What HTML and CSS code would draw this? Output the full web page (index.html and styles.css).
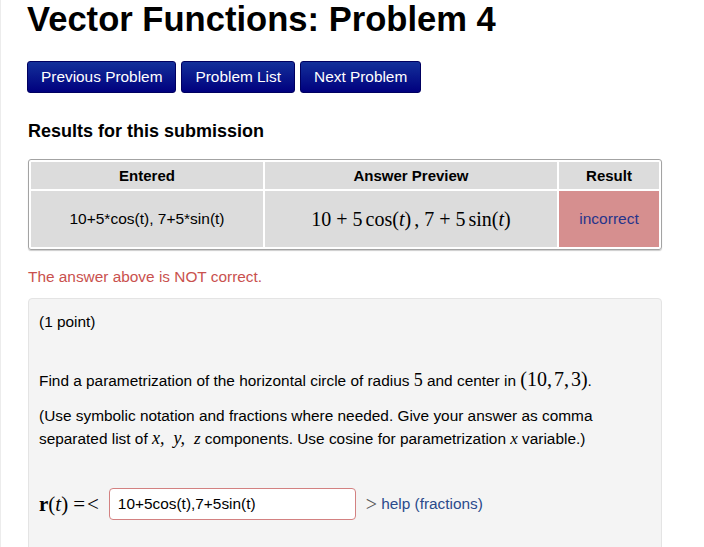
FILE: index.html
```html
<!DOCTYPE html>
<html>
<head>
<meta charset="utf-8">
<link rel="stylesheet" href="styles.css">
</head>
<body>
<div class="page">
  <h1 class="title">Vector Functions: Problem 4</h1>
  <div class="nav">
    <a class="btn">Previous Problem</a>
    <a class="btn">Problem List</a>
    <a class="btn">Next Problem</a>
  </div>
  <h2 class="subhead">Results for this submission</h2>
  <table class="results">
    <colgroup>
      <col class="c1"><col class="c2"><col class="c3">
    </colgroup>
    <tr>
      <th>Entered</th>
      <th>Answer Preview</th>
      <th>Result</th>
    </tr>
    <tr class="row">
      <td class="entered">10+5*cos(t), 7+5*sin(t)</td>
      <td class="preview"><span class="math">10 + 5<span class="sp"></span>cos(<i>t</i>)<span class="sp"></span>, 7 + 5<span class="sp"></span>sin(<i>t</i>)</span></td>
      <td class="bad">incorrect</td>
    </tr>
  </table>
  <p class="warn">The answer above is NOT correct.</p>
  <div class="problem">
    <p class="points">(1 point)</p>
    <p class="q">Find a parametrization of the horizontal circle of radius <span class="m">5</span> and center in <span class="m big">(10,<span class="thin"></span>7,<span class="thin"></span>3)</span>.</p>
    <div class="note">
      <div class="line">(Use symbolic notation and fractions where needed. Give your answer as comma</div>
      <div class="line">separated list of <span class="m">x, &nbsp;y, &nbsp;<span class="sm">z</span></span> components. Use cosine for parametrization <span class="m sm">x</span> variable.)</div>
    </div>
    <div class="answer">
      <span class="m lhs"><b>r</b>(<i>t</i>)<span class="eq">=</span>&lt;</span>
      <span class="input">10+5cos(t),7+5sin(t)</span>
      <span class="m gt">&gt;</span>
      <a class="help">help (fractions)</a>
    </div>
  </div>
</div>
</body>
</html>
```
FILE: styles.css
```css
html, body {
  margin: 0;
  padding: 0;
  background: #fff;
}
body {
  font-family: "Liberation Sans", Arial, sans-serif;
  color: #000;
  border-left: 1px solid #ececec;
  min-height: 547px;
  box-sizing: border-box;
}
.page {
  padding-left: 26px;
  width: 635px;
}
.title {
  margin: 0;
  font-size: 34.6px;
  font-weight: bold;
  line-height: 39px;
}
.nav {
  display: flex;
  gap: 5px;
  margin-top: 22px;
}
.btn {
  display: block;
  height: 30px;
  line-height: 30px;
  padding: 0 13px;
  font-size: 15.4px;
  color: #fff;
  background: linear-gradient(#13309a, #00007e);
  border: 1px solid #000060;
  border-radius: 3px;
}
.subhead {
  margin: 28px 0 0 1px;
  font-size: 18px;
  line-height: 21px;
  font-weight: bold;
}
.results {
  margin-top: 17px;
  margin-left: 1px;
  width: 634px;
  border: 1px solid #a3a3a3;
  border-radius: 3px;
  border-spacing: 2px;
  border-collapse: separate;
  table-layout: fixed;
  box-shadow: 0 1px 1px #ccc;
}
.c1 { width: 232px; }
.c2 { width: 292px; }
.c3 { width: 100px; }
.results th, .results td {
  background: #dcdcdc;
  text-align: center;
  padding: 0;
}
.results th {
  height: 27px;
  font-size: 15px;
  font-weight: bold;
}
.results td {
  height: 56px;
  font-size: 15.5px;
}
.results td.bad {
  background: #d68f8f;
  color: #27348b;
  font-size: 15.5px;
}
.math {
  font-family: "Liberation Serif", "DejaVu Serif", serif;
  font-size: 20px;
}
.sp { display: inline-block; width: 3px; }
.thin { display: inline-block; width: 2px; }
.warn {
  margin: 18px 0 0 1px;
  font-size: 15.4px;
  color: #c9514e;
  line-height: 18px;
}
.problem {
  margin: 12px 0 0 1px;
  width: 634px;
  box-sizing: border-box;
  height: 260px;
  background: #f4f4f4;
  border: 1px solid #e4e4e4;
  border-radius: 4px;
  padding: 11px 10px;
  font-size: 15.4px;
}
.problem p {
  margin: 0;
  line-height: 23px;
}
.q { margin-top: 35px !important; }
.note { margin-top: 12px; }
.note .line { height: 23px; line-height: 23px; white-space: nowrap; }
.m {
  font-family: "Liberation Serif", "DejaVu Serif", serif;
  font-size: 18px;
}
.note .m { font-style: italic; line-height: 1; }
.m.big { font-size: 20px; }
.sm { font-size: 17px; }
.answer {
  display: flex;
  align-items: center;
  margin-top: 38px;
}
.lhs { font-size: 21px; }
.eq { margin: 0 2px 0 5px; }
.input {
  display: block;
  margin-left: 10px;
  width: 247px;
  height: 32px;
  box-sizing: border-box;
  line-height: 30px;
  padding: 0 8px;
  background: #fff;
  border: 1px solid #d38181;
  border-radius: 4px;
  font-size: 15.4px;
}
.gt {
  margin-left: 10px;
  color: #555;
  font-size: 20px;
}
.help {
  margin-left: 4px;
  color: #2a4a8c;
}
```
